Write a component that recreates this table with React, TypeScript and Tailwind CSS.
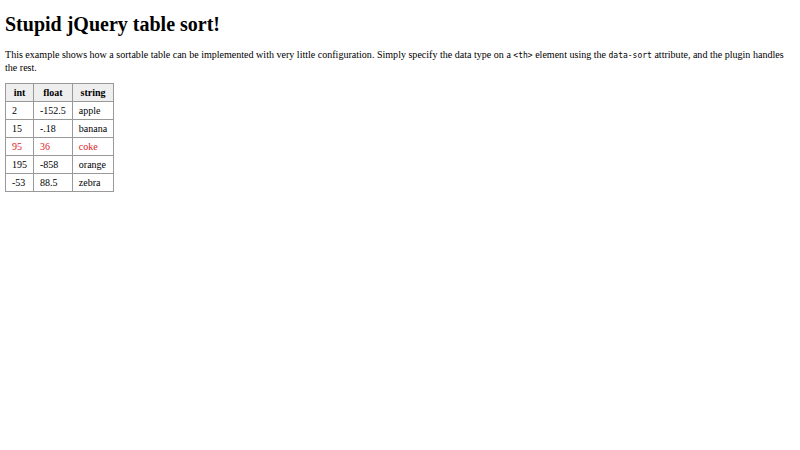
import React from "react";

type Row = { i: string; f: string; s: string; awesome?: boolean };

const rows: Row[] = [
  { i: "2", f: "-152.5", s: "apple" },
  { i: "15", f: "-.18", s: "banana" },
  { i: "95", f: "36", s: "coke", awesome: true },
  { i: "195", f: "-858", s: "orange" },
  { i: "-53", f: "88.5", s: "zebra" },
];

const cell = "border border-[#999] px-[6px] py-[3px] text-left font-normal";
const mono = { fontFamily: '"DejaVu Sans Mono", monospace' };

export default function App() {
  return (
    <div className="min-h-[450px] bg-white px-[5px] pt-[13px] text-black" style={{ fontFamily: '"Liberation Serif", "Times New Roman", serif' }}>
      <h1 className="m-0 text-[20px] font-bold leading-[23px]">Stupid jQuery table sort!</h1>
      <p className="mt-[13px] mb-[10px] text-[10.05px] leading-[11.5px]">
        This example shows how a sortable table can be implemented with very little configuration. Simply specify the data type on a{" "}
        <code className="text-[8px]" style={mono}>&lt;th&gt;</code> element using the{" "}
        <code className="text-[8px]" style={mono}>data-sort</code> attribute, and the plugin handles the rest.
      </p>
      <table className="border-collapse text-[10px] leading-[11px]">
        <thead>
          <tr className="bg-[#eee]">
            <th className={`${cell} !text-center !font-bold`}>int</th>
            <th className={`${cell} !text-center !font-bold`}>float</th>
            <th className={`${cell} !text-center !font-bold`}>string</th>
          </tr>
        </thead>
        <tbody>
          {rows.map((r) => (
            <tr key={r.s} className={r.awesome ? "text-[#d22]" : ""}>
              <td className={cell}>{r.i}</td>
              <td className={cell}>{r.f}</td>
              <td className={cell}>{r.s}</td>
            </tr>
          ))}
        </tbody>
      </table>
    </div>
  );
}
